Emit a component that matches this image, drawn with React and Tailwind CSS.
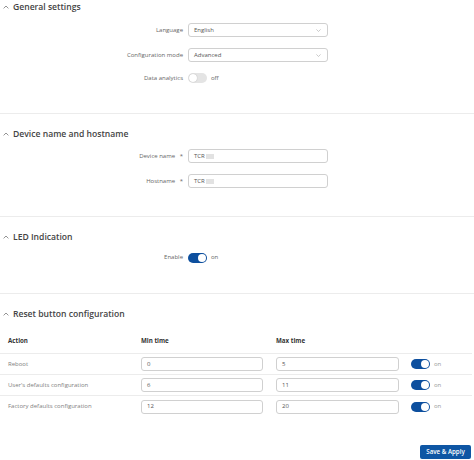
import React from "react";

const Chevron = () => (
  <svg width="6" height="4" viewBox="0 0 6 4" className="ml-[3px] mr-[4px]">
    <path d="M0.6 3.4 L3 1 L5.4 3.4" fill="none" stroke="#777" strokeWidth="0.8" />
  </svg>
);

const Header = ({ children }) => (
  <div className="h-[14px] flex items-center">
    <Chevron />
    <span className="text-[8.6px] font-semibold text-[#444] leading-none">{children}</span>
  </div>
);

const Toggle = ({ on }) =>
  on ? (
    <div className="w-[19px] h-[10px] rounded-full bg-[#0d4f9e] flex items-center justify-end pr-[1px]">
      <div className="w-[8px] h-[8px] rounded-full bg-white" />
    </div>
  ) : (
    <div className="w-[19px] h-[10px] rounded-full bg-[#e4e4e4] flex items-center pl-[1px]">
      <div className="w-[8px] h-[8px] rounded-full bg-white shadow-[0_0_1px_rgba(0,0,0,0.3)]" />
    </div>
  );

const Row = ({ label, children, className = "" }) => (
  <div className={"flex items-center " + className}>
    <div className="w-[183px] text-right text-[6px] text-[#666]">{label}</div>
    <div className="ml-[5px] flex items-center">{children}</div>
  </div>
);

const Input = ({ children, w = "w-[140px]", select }) => (
  <div className={w + " h-[14px] border border-[#d0d0d0] rounded-[3px] flex items-center pl-[5px] pr-[6px] text-[6px] text-[#555]"}>
    <span className="flex-1 flex items-center">{children}</span>
    {select && (
      <svg width="5" height="3" viewBox="0 0 5 3">
        <path d="M0.4 0.4 L2.5 2.5 L4.6 0.4" fill="none" stroke="#aaa" strokeWidth="0.6" />
      </svg>
    )}
  </div>
);

const Blurred = () => (
  <>
    TCR<span className="inline-block w-[8px] h-[5px] bg-[#e2e2e2] ml-[1px]" />
  </>
);

const TRow = ({ action, min, max, last }) => (
  <div className={"h-[21px] flex items-center " + (last ? "" : "border-b border-[#ececec]")}>
    <div className="w-[141px] pl-[8px] text-[6px] text-[#808080]">{action}</div>
    <div className="w-[135px]">
      <Input w="w-[122px]">{min}</Input>
    </div>
    <div className="w-[135px]">
      <Input w="w-[123px]">{max}</Input>
    </div>
    <div className="flex items-center">
      <Toggle on />
      <span className="ml-[4px] text-[6px] text-[#999]">on</span>
    </div>
  </div>
);

export default function App() {
  return (
    <div
      className="w-[474px] h-[460px] bg-white overflow-hidden"
      style={{ fontFamily: '"Open Sans", "Noto Sans", sans-serif' }}
    >
      <div className="h-[114px] border-b border-[#ececec]">
        <Header>General settings</Header>
        <Row label="Language" className="mt-[9px]">
          <Input select>English</Input>
        </Row>
        <Row label="Configuration mode" className="mt-[11px]">
          <Input select>Advanced</Input>
        </Row>
        <Row label="Data analytics" className="mt-[11px] h-[10px]">
          <Toggle />
          <span className="ml-[4px] text-[6px] text-[#666]">off</span>
        </Row>
      </div>

      <div className="h-[103px] border-b border-[#ececec] pt-[13px]">
        <Header>Device name and hostname</Header>
        <Row label={<span>Device name <span className="ml-[3px]">*</span></span>} className="mt-[8px]">
          <Input><Blurred /></Input>
        </Row>
        <Row label={<span>Hostname <span className="ml-[3px]">*</span></span>} className="mt-[11px]">
          <Input><Blurred /></Input>
        </Row>
      </div>

      <div className="h-[77px] border-b border-[#ececec] pt-[13px]">
        <Header>LED Indication</Header>
        <Row label="Enable" className="mt-[8px] h-[11px]">
          <Toggle on />
          <span className="ml-[4px] text-[6px] text-[#666]">on</span>
        </Row>
      </div>

      <div className="pt-[13px]">
        <Header>Reset button configuration</Header>
        <div className="mt-[8px] w-[472px]">
          <div className="h-[25px] flex items-center border-b border-[#ececec] text-[6.2px] font-bold text-[#333]">
            <div className="w-[141px] pl-[8px]">Action</div>
            <div className="w-[135px]">Min time</div>
            <div className="w-[135px]">Max time</div>
          </div>
          <TRow action="Reboot" min="0" max="5" />
          <TRow action="User's defaults configuration" min="6" max="11" />
          <TRow action="Factory defaults configuration" min="12" max="20" last />
        </div>
        <div className="mt-[28px] flex justify-end pr-[3px]">
          <button className="w-[51px] h-[14px] rounded-[2px] bg-[#0e56a4] text-white text-[6.2px] font-semibold flex items-center justify-center">
            Save &amp; Apply
          </button>
        </div>
      </div>
    </div>
  );
}
